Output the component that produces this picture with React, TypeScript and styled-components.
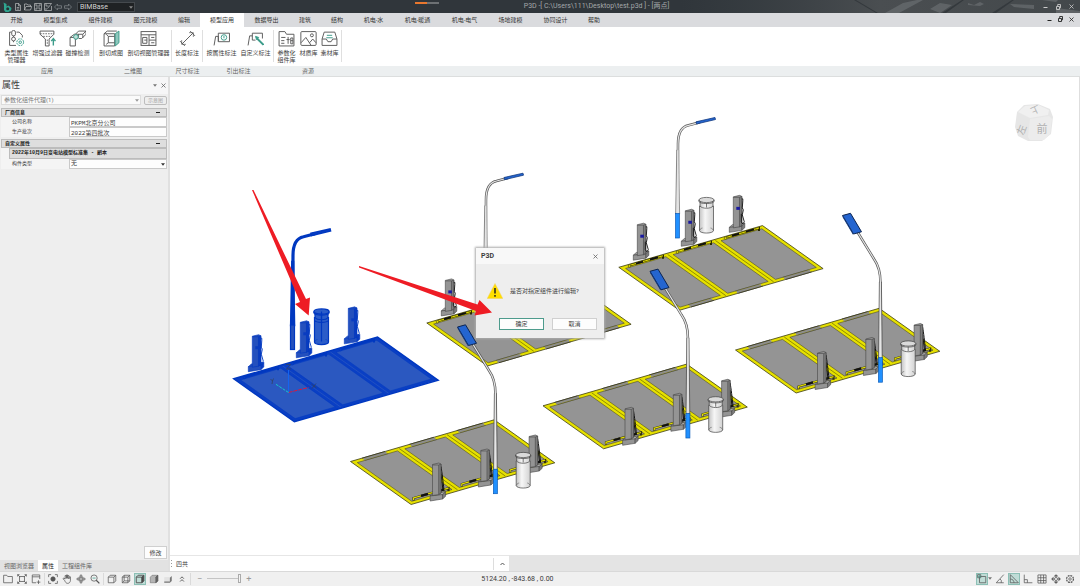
import React from "react";
import styled, { createGlobalStyle, css } from "styled-components";

const GlobalStyle = createGlobalStyle`
  * { box-sizing: border-box; }
  body {
    margin: 0;
    font-family: Roboto, "Noto Sans CJK SC", sans-serif;
    font-size: 6px;
    line-height: 8px;
    color: #3c3c3c;
    background: #f0f0f0;
  }
  button, input, select { font: inherit; color: inherit; margin: 0; padding: 0; }
  button { background: none; border: 0; white-space: nowrap; cursor: pointer; }
  svg { display: block; flex: none; }
`;

const Page = styled.div`
  display: flex;
  flex-direction: column;
  min-height: 100vh;
`;

/* ---------- title bar ---------- */

const TitleBar = styled.header`
  position: relative;
  display: flex;
  align-items: center;
  height: 13px;
  padding: 0 4px 0 3px;
  color: #a4a8aa;
  background: #30363b;
`;
const TitleTexture = styled.svg`
  position: absolute;
  right: 0;
  top: 0;
  height: 13px;
  width: 400px;
`;
const QuickTools = styled.div`
  display: flex;
  flex: 1;
  align-items: center;
  gap: 1px;
`;
const QuickButton = styled.button`
  display: flex;
  width: 9px;
  height: 11px;
  align-items: center;
  justify-content: center;
`;
const SelectWrap = styled.span`
  position: relative;
  display: flex;
  svg {
    position: absolute;
    right: 2px;
    top: 50%;
    margin-top: -1px;
    pointer-events: none;
  }
`;
const ProductSelect = styled.select`
  appearance: none;
  width: 58px;
  height: 10px;
  margin-left: 4px;
  padding-left: 2px;
  border: 1px solid #454a4e;
  background: #1f2224;
  color: #d4d4d4;
  font-size: 7px;
  line-height: 8px;
`;
const Progress = styled.div`
  position: absolute;
  left: 50%;
  top: 2px;
  width: 24px;
  height: 2px;
  margin-left: -125px;
  background: linear-gradient(to right, #e8772e 50%, #6d7174 50%);
`;
const DocumentTitle = styled.h1`
  position: relative;
  margin: 0 0 0 114px;
  font-size: 7px;
  font-weight: 400;
  line-height: 13px;
  white-space: nowrap;
`;
const WindowButtons = styled.div`
  position: relative;
  display: flex;
  flex: 1;
  justify-content: flex-end;
  gap: 3px;
`;
const WindowButton = styled.button<{ $tight?: boolean }>`
  display: flex;
  align-items: center;
  justify-content: center;
  width: ${(p) => (p.$tight ? 8 : 10)}px;
  height: 12px;
`;

/* ---------- menu tabs ---------- */

const MenuBar = styled.nav`
  display: flex;
  height: 14px;
  padding-right: 5px;
  background: #dadbde;
`;
const MenuTab = styled.button<{ $width: number; $active?: boolean }>`
  width: ${(p) => p.$width}px;
  background: ${(p) => (p.$active ? "#fff" : "transparent")};
  color: #333;
`;

/* ---------- ribbon ---------- */

const Ribbon = styled.section`
  display: flex;
  height: 50px;
  background: #fff;
  border-bottom: 1px solid #dcdede;
`;
const Group = styled.div<{ $fill?: boolean }>`
  display: flex;
  flex-direction: column;
  ${(p) => p.$fill && css`flex: 1;`}
`;
const GroupItems = styled.div<{ $line?: boolean }>`
  display: flex;
  flex: 1;
  min-height: 0;
  margin-top: 3px;
  margin-bottom: 4px;
  padding: 0 1px;
  ${(p) => p.$line && css`border-right: 1px solid #dfdfdf;`}
`;
const GroupLabel = styled.div`
  flex: none;
  height: 10px;
  line-height: 10px;
  text-align: center;
  color: #666;
  background: #eceff0;
`;
const Tool = styled.button<{ $width: number }>`
  display: flex;
  flex-direction: column;
  align-items: center;
  gap: 2px;
  width: ${(p) => p.$width}px;
  line-height: 7px;
  white-space: pre;
`;

/* ---------- body ---------- */

const Main = styled.main`
  display: flex;
  flex: 1;
`;
const SidePanel = styled.aside`
  display: flex;
  flex-direction: column;
  width: 170px;
  border-right: 2px solid #e0e0e0;
  background: #eeeeee;
`;
const PanelTitle = styled.div`
  display: flex;
  align-items: center;
  height: 17px;
  padding: 0 2px;
  gap: 4px;
  background: #f6f6f7;
  h2 {
    flex: 1;
    margin: 0;
    font-size: 9px;
    line-height: 17px;
    font-weight: 400;
  }
`;
const PanelTop = styled.div`
  display: flex;
  align-items: center;
  justify-content: space-between;
  padding: 1px 1px 3px;
`;
const mono = css`font-family: "Liberation Mono", "Noto Sans CJK SC", monospace;`;
const ComponentSelect = styled.select`
  appearance: none;
  width: 140px;
  height: 10px;
  padding-left: 2px;
  border: 1px solid #dcdcdc;
  background: #fafafa;
  color: #777;
`;
const DiagramButton = styled.button`
  width: 23px;
  height: 9px;
  border: 1px solid #bdbdbd;
  border-radius: 2px;
  color: #a8a8a8;
  font-size: 5px;
  line-height: 7px;
`;
const Section = styled.section`
  margin: 0 1px 2px;
  background: #f4f4f4;
  font-size: 5px;
  ${mono}
`;
const SectionHead = styled.div`
  display: flex;
  align-items: center;
  justify-content: space-between;
  height: 9px;
  padding: 0 6px 0 3px;
  border: 1px solid #bcbcbc;
  background: #dedede;
  font-weight: 700;
  color: #222;
`;
const SubHead = styled.div`
  height: 11px;
  margin-left: 8px;
  padding-left: 2px;
  border: 1px solid #bcbcbc;
  background: #dedede;
  font-weight: 700;
  line-height: 9px;
  white-space: pre;
  color: #222;
`;
const Field = styled.div`
  display: flex;
  align-items: center;
  height: 10px;
  label { width: 68px; padding-left: 11px; }
  > span { flex: 1; }
`;
const fieldBox = css`
  flex: 1;
  width: 100%;
  min-width: 0;
  height: 10px;
  padding-left: 1px;
  border: 1px solid #c9c9c9;
  border-radius: 0;
  background: #fdfdfd;
  font-size: 6px;
`;
const FieldInput = styled.input`${fieldBox}`;
const FieldSelect = styled.select`appearance: none; ${fieldBox}`;
const PanelActions = styled.div`
  display: flex;
  flex: 1;
  align-items: flex-end;
  justify-content: flex-end;
  padding: 0 1px 1px;
`;
const ApplyButton = styled.button`
  width: 23px;
  height: 13px;
  border: 1px solid #cfcfcf;
  background: #fdfdfd;
`;
const PanelTabs = styled.div`
  display: flex;
  height: 11px;
  background: #e2e2e2;
`;
const PanelTab = styled.button<{ $active?: boolean }>`
  padding: 0 4px;
  color: ${(p) => (p.$active ? "#222" : "#666")};
  background: ${(p) => (p.$active ? "#fff" : "transparent")};
`;

const Workspace = styled.section`
  display: flex;
  flex: 1;
  flex-direction: column;
  min-width: 0;
`;
const Viewport = styled.div`
  position: relative;
  flex: 1;
  min-height: 360px;
  background: #fff;
  border-right: 1px solid #dedede;
`;
const Scene = styled.svg`
  position: absolute;
  inset: 0;
  pointer-events: none;
`;
const ViewTabs = styled.div`
  display: flex;
  height: 16px;
  background: #e4e4e4;
`;
const ViewTab = styled.div`
  display: flex;
  align-items: center;
  width: 339px;
  padding: 0 4px 0 1px;
  border-top: 1px solid #e6e6e6;
  background: #fff;
  button:first-of-type { flex: 1; padding-left: 3px; text-align: left; }
`;
const TabMenu = styled.button`
  display: flex;
  justify-content: center;
  width: 12px;
  padding: 4px 0 4px 5px;
  border-left: 1px solid #ddd;
`;

/* ---------- dialog ---------- */

const Dialog = styled.div`
  position: absolute;
  left: 306px;
  top: 171px;
  display: flex;
  flex-direction: column;
  width: 128px;
  height: 90px;
  background: #eeeeee;
  box-shadow: 0 0 2px 1px #aaaaaa;
`;
const DialogTitle = styled.div`
  display: flex;
  align-items: center;
  justify-content: space-between;
  height: 16px;
  padding: 0 6px 0 5px;
  background: #f8f8f8;
  font-size: 7px;
  font-weight: 700;
`;
const DialogBody = styled.div`
  display: flex;
  flex: 1;
  align-items: center;
  gap: 7px;
  padding: 0 11px;
  p { margin: 0; }
`;
const DialogActions = styled.div`
  display: flex;
  justify-content: flex-end;
  gap: 8px;
  padding: 0 7px 8px;
`;
const DialogButton = styled.button<{ $primary?: boolean }>`
  width: 45px;
  height: 12px;
  border: 1px solid ${(p) => (p.$primary ? "#4d9b8c" : "#d0d0d0")};
  background: #fdfdfd;
`;

/* ---------- status bar ---------- */

const StatusBar = styled.footer`
  display: flex;
  align-items: center;
  height: 15px;
  padding: 0 4px 1px 2px;
  border-top: 1px solid #d9d9d9;
  background: #f0f0f0;
`;
const StatusGroup = styled.div`
  display: flex;
  align-items: center;
  gap: 2px;
  padding-right: 2px;
  margin-right: 2px;
  border-right: 1px solid #dadada;
`;
const StatusButton = styled.button<{ $on?: boolean }>`
  display: flex;
  align-items: center;
  justify-content: center;
  width: 12px;
  height: 12px;
  ${(p) => p.$on && css`background: #bfdcd6; border: 1px solid #8cbfb5;`}
`;
const ZoomControl = styled.label`
  display: flex;
  align-items: center;
  gap: 5px;
  color: #999;
  font-size: 9px;
  padding-left: 4px;
  input {
    appearance: none;
    width: 34px;
    height: 10px;
    background: linear-gradient(#c4c4c4, #c4c4c4) center / 100% 1px no-repeat;
  }
  input::-webkit-slider-thumb {
    appearance: none;
    width: 3px;
    height: 9px;
    border: 1px solid #aaa;
    background: #f4f4f4;
  }
`;
const Coordinates = styled.output`
  flex: 1;
  padding-left: 230px;
  font-size: 7px;
  white-space: pre;
`;
const StatusRight = styled.div`
  display: flex;
  gap: 2px;
`;
const SplitButton = styled.span`
  display: flex;
  align-items: center;
`;

/* ---------- icons ---------- */

const G = "#3c9c8a";
type IcoProps = { s?: number; c?: string; w?: number; children: React.ReactNode };
const Ico = ({ s = 10, c = "#555", w = 1, children }: IcoProps) => (
  <svg width={s} height={s} viewBox="0 0 16 16" fill="none" stroke={c} strokeWidth={w} aria-hidden="true">
    {children}
  </svg>
);
const Caret = ({ c = "#777" }: { c?: string }) => (
  <svg width="4" height="3" viewBox="0 0 4 3" aria-hidden="true"><path d="M0 .3h4L2 2.7z" fill={c} /></svg>
);
const Cross = ({ c = "#666" }: { c?: string }) => (
  <svg width="5" height="5" viewBox="0 0 5 5" stroke={c} strokeWidth=".8" aria-hidden="true"><path d="M.5.5l4 4M4.5.5l-4 4" /></svg>
);
const Minus = ({ c = "#666" }: { c?: string }) => (
  <svg width="5" height="5" viewBox="0 0 5 5" stroke={c} strokeWidth="1" aria-hidden="true"><path d="M.5 3.5h4" /></svg>
);
const Collapse = () => (
  <svg width="4" height="5" viewBox="0 0 4 5" stroke="#222" strokeWidth="1" aria-hidden="true"><path d="M0 2.5h4" /></svg>
);
const Restore = ({ c = "#666" }: { c?: string }) => (
  <svg width="5" height="6" viewBox="0 0 5 6" stroke={c} strokeWidth=".9" fill="none" aria-hidden="true"><path d="M.5 2.5h3v3h-3zM1.7 2V.5h2.8v3.3h-1" /></svg>
);

const ribbonIcons: Record<string, React.ReactNode> = {
  type: <><path d="M3 2H1.500v12.500h6M8 2h2.500l3 3v2" /><rect x="3.500" y=".5" width="3.500" height="5" rx="1.500" /><circle cx="5.200" cy="8.500" r="1.800" /><path d="M5.200 5.500v1.200M5.200 10.300v1.200" /><circle cx="11.500" cy="11.500" r="3.200" stroke={G} strokeDasharray="1.700 .8" /><circle cx="11.500" cy="11.500" r="1.200" stroke={G} /></>,
  filter: <><path d="M1 1h13v3L9.500 8.500V15H6V8.500L1 4z" /><path d="M1 3.500h13M4 6h7M7.800 9v4" strokeDasharray="1.500 1" strokeWidth=".8" /><path d="M13.500 14.500v-6M11.500 10.500l2-2.500 2 2.500" stroke={G} strokeWidth="1.300" /></>,
  clash: <><path d="M1 7l4-3h4v3l-3 2v6H1zM1 7h5M6 9V7l3-3" /><path d="M6 4l3-3h7v3l-4 4H9M9 4h4l3-3M13 4v3.500" /><circle cx="6.500" cy="6.500" r="2.200" stroke={G} fill="#bfe0d9" /></>,
  section: <><path d="M1 3.500L4 1h9M1 3.500V15h10V3.500zM11 6H5v6h6M5 12l-2 1.500M5 6L3 4" /><path d="M11.500 3.500L15 1v11l-3.500 3z" stroke={G} fill="#8fc7bc" /></>,
  views: <><rect x="1" y="1.500" width="14" height="13" /><path d="M1 4.500h14M8.500 4.500v10M8.500 9.500H15M2.500 7h4v5.500h-4zM10.500 7h3M10.500 12h3M4 9.500h2.500" /></>,
  length: <><path d="M3 13L13 3M1 10.500l4.500 4.500M10.500 1l4.500 4.500" /><path d="M2.500 9.500v4h4M9.500 2.500h4v4" strokeWidth=".7" /></>,
  prop: <><path d="M5 3h10.500v8H5zM5 6H2.500L1 14.500M5 6v5" /><circle cx="10.300" cy="7" r="2.600" stroke={G} /><path d="M10.300 5.500v2.300" stroke={G} /></>,
  custom: <><path d="M14.500 8V3H5v6.500h3M5 5.500H2.500L1 14.500" /><path d="M9.500 8l6 6" stroke={G} strokeWidth="1.800" /><path d="M8 6l3 1-2 2z" stroke={G} fill={G} /></>,
  param: <><path d="M1 1.500h5.500L8 4h7v11H1zM3 7h4M3 10h3M3 12.500h3" /><path d="M9.500 6.500v6.500M8 9h3M12 7.500h2v5.500h-2zM12 10h2" /></>,
  material: <><rect x=".8" y="1.500" width="14.400" height="13" rx="1" /><circle cx="11.200" cy="5" r="1.400" /><path d="M1 12l4.500-5 5 7.500M9 12l3-3.500 3 3.500" /></>,
  assets: <><path d="M1 8.500L3 2h10l2 6.500v6H1zM1 8.500h4l1.500 2.500h3L11 8.500h4" /><path d="M5.500 5h5M5 7.300h6" stroke={G} /></>,
};

const toolGroups = [
  { label: "应用", tools: [["type", "类型属性\n管理器", 31], ["filter", "增强过滤器", 31], ["clash", "碰撞检测", 29]] },
  { label: "二维图", tools: [["section", "剖切成图", 32], ["views", "剖切视图管理器", 43]] },
  { label: "尺寸标注", tools: [["length", "长度标注", 28]] },
  { label: "引出标注", tools: [["prop", "按属性标注", 35], ["custom", "自定义标注", 33]] },
  { label: "资源", tools: [["param", "参数化\n组件库", 23], ["material", "材质库", 21], ["assets", "素材库", 21]] },
] as { label: string; tools: [string, string, number][] }[];

const menu: [string, number][] = [
  ["开始", 33], ["模型集成", 45], ["组件建模", 45], ["图元建模", 45], ["编辑", 32], ["模型应用", 44],
  ["数据导出", 45], ["建筑", 32], ["结构", 32], ["机电-水", 41], ["机电-暖通", 47], ["机电-电气", 47],
  ["场地建模", 45], ["协同设计", 45], ["帮助", 32],
];

const quick = [
  ["新建", <path d="M3 1h6.500L13 5v10H3zM9 1v4.500h4M5.500 9h5M5.500 12h5" />],
  ["打开", <path d="M1 14V2h5l1.500 2H13v3M1 14L4 7h11.500L13 14z" />],
  ["保存", <path d="M1 1h14v14H1zM4 1v5h8V1M4 15v-5h8v5" />],
  ["另存为", <path d="M15 6v9H1V1h14L7 11M4 1v5h5M4 15v-5" />],
  ["撤销", <path d="M1 8l6-6v3.500h8v5H7V14z" />],
  ["重做", <path d="M15 8L9 2v3.500H1v5h8V14z" />],
] as [string, React.ReactNode][];

const cube = "M2 5l3-3h9v9l-3 3H2zM2 5h9v9M11 5l3-3";
type StatusItem = { name: string; on?: boolean; d: React.ReactNode };
const statusLeft: StatusItem[][] = [
  [
    { name: "文件夹", d: <path d="M1 14V2h5l1.500 2H15v10z" /> },
    { name: "适应窗口", d: <path d="M1 1l4 4M15 1l-4 4M1 15l4-4M15 15l-4-4M4 4h8v8H4zM1 4V1h3M12 1h3v3M15 12v3h-3M4 15H1v-3" /> },
    { name: "新窗口", d: <path d="M14 8V1.500H2V14h6M2 4.500h12M12 10v6M9 13h6" /> },
  ],
  [
    { name: "聚焦", d: <><path d="M1 5V1h4M11 1h4v4M15 11v4h-4M5 15H1v-4" /><circle cx="8" cy="8" r="3.500" fill="#555" /></> },
    { name: "平移", d: <path d="M4 10L1.500 7.500 3 6.500l2 1.500V2.500h2V7 1.500h2V7 2.500h2V8l.5-3.500h2V10c0 3-2 5-4.500 5S5.500 13 4 10z" /> },
    { name: "旋转", d: <><path d="M5.500 4L8 1l2.500 3M5.500 12L8 15l2.500-3M4 5.500L1 8l3 2.500M12 5.500L15 8l-3 2.500" /><ellipse cx="8" cy="8" rx="5" ry="2" /><ellipse cx="8" cy="8" rx="2" ry="5" /></> },
    { name: "缩放", d: <><circle cx="6.500" cy="6.500" r="5" /><path d="M10 10l5 5" strokeWidth="2" /><path d="M4 6.500h5" stroke={G} /></> },
  ],
  [
    { name: "线框", d: <path d={cube} /> },
    { name: "隐藏线", d: <path d={cube + "M5 2v9M2 14l3-3h9"} /> },
    { name: "着色", on: true, d: <><path d={cube} strokeWidth="1.500" /><path d="M11 5l3-3v9l-3 3z" fill="#444" /></> },
    { name: "真实", d: <><path d="M2 5l3-3h9v9l-3 3H2z" fill="#b4b4b4" strokeWidth=".7" /><path d="M11 5l3-3v9l-3 3z" fill="#666" /></> },
    { name: "无边", d: <><path d="M2 5h9v9H2z" fill="#e2e2e2" stroke="none" /><path d="M2 14h9l3-3V3l-3 3v6H2z" fill="#777" stroke="none" /></> },
    { name: "展开", d: <path d="M5 7.500l3-3 3 3M5 12l3-3 3 3" strokeWidth="1.500" /> },
  ],
];
const statusRight: StatusItem[] = [
  { name: "捕捉", on: true, d: <><path d="M4 4h10v10H4zM1 1h5v5H1z" /><circle cx="4" cy="4" r="1.500" stroke={G} /></> },
  { name: "极轴", d: <path d="M14 1L2 14h12M8 8l2 2v4" /> },
  { name: "角度", on: true, d: <path d="M2 1v13h13zM2 8c4 0 6 3 6 6" /> },
  { name: "正交", d: <path d="M2 1v13h13M2 9h5v5" /> },
  { name: "网格", d: <path d="M1.500 1.500h13v13h-13zM6 1.500v13M10.500 1.500v13M1.500 6h13M1.500 10.500h13" /> },
  { name: "查看", d: <><path d="M1 8l2.500-2.500v5zM15 8l-2.500-2.500v5zM8 1L5.500 3.500h5zM8 15l-2.500-2.500h5z" fill="#555" /><circle cx="8" cy="8" r="2.500" /></> },
  { name: "设置", d: <><circle cx="8" cy="8" r="5.500" strokeDasharray="3 1.300" strokeWidth="2" /><circle cx="8" cy="8" r="2" /></> },
];

/* ---------- model drawing ---------- */

type Shade = { edge: string; line: string; bay: string; body: string; side: string; pole: string; panel: string; foot: string };
const normal: Shade = { edge: "#e6e000", line: "#3c3c14", bay: "#949494", body: "#949494", side: "#7c7c7c", pole: "#e4e4e4", panel: "#2465d0", foot: "#2090ff" };
const selected: Shade = { edge: "#0a3fc4", line: "#0038c0", bay: "#2b58c0", body: "#2450bd", side: "#0a3cc0", pole: "#0a3fc4", panel: "#0a3fc4", foot: "#2450bd" };

const at = (x: number, y: number) => (u: number, v: number) =>
  `${(x + u * 143.7 + v * 60.6).toFixed(1)},${(y - u * 41.7 + v * 43).toFixed(1)}`;

const Slab = ({ x, y, k, greyEdge }: { x: number; y: number; k: Shade; greyEdge: 0 | 1 }) => {
  const p = at(x, y);
  const blue = k === selected;
  return (
    <g>
      <polygon points={[p(0, 0), p(1, 0), p(1, 1), p(0, 1)].join(" ")} fill={k.edge} stroke={k.line} strokeWidth={blue ? 1.5 : 0.8} />
      {[[0.026, 0.306], [0.357, 0.639], [0.69, 0.974]].map(([a, b]) => (
        <polygon key={a} points={[p(a, 0.05), p(b, 0.05), p(b, 0.95), p(a, 0.95)].join(" ")} fill={k.bay} stroke={k.line} strokeWidth=".5" />
      ))}
      {[0.331, 0.664].map((u) => (
        <polyline key={u} points={`${p(u, 0.02)} ${p(u, 0.98)}`} stroke={blue ? "#2b58c0" : "#6b6a00"} strokeWidth=".7" fill="none" />
      ))}
      {!blue && [[0.08, 0.24], [0.41, 0.58], [0.74, 0.92]].map(([a, b]) => (
        <g key={a}>
          <polyline points={`${p(a, greyEdge ? 0.975 : 0.025)} ${p(b, greyEdge ? 0.975 : 0.025)}`} stroke="#8d8d8d" strokeWidth="2.2" />
          <polyline points={`${p(a, greyEdge)} ${p(b, greyEdge)}`} stroke="#333" strokeWidth=".8" />
          <polyline points={`${p(a, greyEdge ? 0.95 : 0.05)} ${p(b, greyEdge ? 0.95 : 0.05)}`} stroke="#444" strokeWidth=".5" />
        </g>
      ))}
    </g>
  );
};

const Pump = ({ x, y, k, front }: { x: number; y: number; k: Shade; front?: boolean }) => {
  const blue = k === selected;
  const ink = blue ? k.line : "#444";
  return (
    <g transform={`translate(${x} ${y})`} stroke={ink} strokeWidth=".6" strokeLinejoin="round">
      {front && <path d="M8.500 3c1 6 2 14 3 24M8.500 10l2 17" fill="none" stroke="#111" strokeWidth="1" />}
      <g transform={front ? "translate(1.6 1)" : undefined}>
        <path d="M-4 31.500l3-2.700 12.500-1.500-2.500 3.200z" fill={blue ? k.body : "#a6a6a6"} />
        <path d="M-4 31.500l12.500-1.500v4.500l-12.500 2z" fill={k.body} />
        <path d="M8.500 30l3-2.700v4.500l-3 2.700z" fill={k.side} />
      </g>
      <path d="M0 1l6.300-1.500 2.200 1v29L6.200 31 0 32z" fill={k.body} />
      <path d="M6.200 1.500l2.300-1v29L6.200 31z" fill={k.side} />
      <path d="M0 1.500h6" fill="none" />
      {!front && (
        <>
          <rect x="3" y="11" width="3.600" height="3" fill={blue ? k.side : "#1a1aa0"} stroke="none" />
          <path d="M8.500 3h1v2l-.5 7 1 2-1 5 2 7-1.500 2-1.500-2V18" fill="none" stroke={blue ? ink : "#111"} strokeWidth=".9" />
        </>
      )}
    </g>
  );
};

const Barrel = ({ x, y, k }: { x: number; y: number; k: Shade }) => {
  const blue = k === selected;
  const ink = blue ? k.line : "#444";
  return (
    <g transform={`translate(${x} ${y})`} stroke={ink} strokeWidth={blue ? 1.2 : 0.7} fill={blue ? "#2b5cc8" : "url(#barrel)"}>
      <path d="M-7 6v24.500c0 3.400 14 3.400 14 0V6z" />
      <path d="M-7 30.500c1-2 2-2.300 3-2.500M7 30.500c-1-2-2-2.300-3-2.500" fill="none" strokeWidth=".5" />
      <path d="M-6.500 1v5c2 3 11 3 13 0V1z" />
      <path d="M0 3v4.500" />
      <ellipse cx="0" cy="0" rx="7.600" ry="2.600" fill={blue ? "#2b5cc8" : "#dadada"} />
      <path d="M-7.600 0v1.200c0 3.200 15.200 3.200 15.200 0V0" fill="none" />
      {blue && <path d="M0 0v30M-7 9c2 2.500 12 2.500 14 0" fill="none" />}
    </g>
  );
};

const backPole = "M677.600 214L678 144Q678 127.500 688.500 125.300L700 122.300";
const LotBack = ({ dx, dy, k = normal }: { dx: number; dy: number; k?: Shade }) => {
  const blue = k === selected;
  const ink = blue ? k.line : "#555";
  return (
    <g transform={`translate(${dx} ${dy})`}>
      <path d={backPole} fill="none" stroke={ink} strokeWidth={blue ? 3.2 : 2.5} />
      <path d="M676.800 150h1.800l1 64h-4z" fill={blue ? k.line : "#e4e4e4"} stroke={ink} strokeWidth={blue ? 1.4 : 0.6} />
      {!blue && <path d={backPole} fill="none" stroke={k.pole} strokeWidth="1.200" />}
      <path d="M696 121.800l19-4.300.5 2-19 4.500z" fill={k.panel} stroke={blue ? k.line : "#123a80"} strokeWidth={blue ? 1.6 : 0.8} />
      <rect x="675.500" y="213.500" width="4" height="24.500" fill={k.foot} stroke={blue ? k.line : "#0d5cb8"} strokeWidth={blue ? 1.2 : 0.7} />
      <Slab x={618.8} y={267.3} k={k} greyEdge={1} />
      {[0, 48, 96].map((d) => (
        <g key={d}>
          <path d={`M${630 + d} ${265.3 - d * 0.29}l33-9.500v3`} fill="none" stroke={blue ? k.line : "#2a2a00"} strokeWidth="2" />
          {!blue && <path d={`M${630 + d} ${265.3 - d * 0.29}l33-9.500`} stroke={k.edge} strokeWidth="1.100" />}
          {!blue && <path d={`M${636 + d} ${263.6 - d * 0.29}l7-2M${650 + d} ${259.5 - d * 0.29}l8-2.300`} stroke="#111" strokeWidth="2" />}
          <circle cx={629.5 + d} cy={266 - d * 0.29} r="1.300" fill={k.edge} stroke={k.line} strokeWidth=".6" />
          <Pump x={637.3 + d} y={223.7 - d * 0.29} k={k} />
        </g>
      ))}
      <Barrel x={706.5} y={200} k={k} />
    </g>
  );
};

const frontPole = "M880.400 358V282Q880.400 268 874 259L857.500 232";
const LotFront = ({ dx, dy }: { dx: number; dy: number }) => (
  <g transform={`translate(${dx} ${dy})`}>
    <Slab x={735.5} y={350} k={normal} greyEdge={0} />
    {[0, 48.3, 96.6].map((d) => (
      <g key={d}>
        <path d={`M${798.5 + d} ${389 - d * 0.29}v-2.500l35-9.800v3`} fill="none" stroke="#33330a" strokeWidth="2.200" />
        <path d={`M${798.5 + d} ${388.5 - d * 0.29}v-2l35-9.800`} fill="none" stroke="#e6e000" strokeWidth="1.200" />
        <path d={`M${806 + d} ${384.4 - d * 0.29}l7-2M${824 + d} ${379.4 - d * 0.29}l5-1.400`} stroke="#111" strokeWidth="2.200" />
        <Pump x={817.5 + d} y={352 - d * 0.29} k={normal} front />
      </g>
    ))}
    <path d={frontPole} fill="none" stroke="#555" strokeWidth="2.500" />
    <path d="M879.400 282h2l.9 76h-3.800z" fill="#d8d8d8" stroke="#444" strokeWidth=".7" />
    <path d={frontPole} fill="none" stroke="#e6e6e6" strokeWidth="1.200" />
    <path d="M842.500 215.500l8-2.200 11 18.500-8 2.200z" fill="#2465d0" stroke="#0d2550" strokeWidth="1" />
    <path d="M842.500 215.500l.3 2 10 17 .7-.5z" fill="#123a80" />
    <rect x="878.400" y="357.700" width="4" height="24.500" fill="#2090ff" stroke="#0d5cb8" strokeWidth=".7" />
    <Barrel x={908.2} y={343.5} k={normal} />
  </g>
);

const SceneDrawing = () => (
  <Scene width="100%" height="100%" viewBox="170 77 909 478" preserveAspectRatio="xMinYMin meet" role="img" aria-label="模型视图">
    <defs>
      <linearGradient id="barrel">
        <stop offset="0" stopColor="#c4c4c4" />
        <stop offset=".4" stopColor="#f6f6f6" />
        <stop offset="1" stopColor="#d2d2d2" />
      </linearGradient>
    </defs>
    <LotBack dx={0} dy={0} />
    <LotBack dx={-192} dy={55.7} />
    <LotBack dx={-385} dy={111.5} k={selected} />
    <LotFront dx={0} dy={0} />
    <LotFront dx={-192.5} dy={55.8} />
    <LotFront dx={-385} dy={111.5} />
    <g fill="none" strokeWidth="1">
      <path d="M288.500 392.500V370" stroke="#1464f0" />
      <path d="M288.500 392.500l20-5" stroke="#d81840" strokeDasharray="4 1" />
      <path d="M288.500 392.500l-13-8.500" stroke="#18c8c8" strokeDasharray="3 1" />
      <path d="M286 364.500h4.500l-4 4.500h4.500M270.500 379l2 2 1-2.500M272.500 381l-.5 3M311.500 384l5 4M316 383.500l-4 5" stroke="#33415e" strokeWidth=".8" />
    </g>
    <g>
      <path d="M1024 105l14-1 12 5 3 8-2 17-9 7h-14l-10-5-3-9 2-15z" fill="#e6e6e6" />
      <path d="M1030 119l19-3 3 3-2 15-6 6h-14l-2-3z" fill="#ececec" />
      <path d="M1018 112l7-6 13-1 11 5-1 5-18 3z" fill="#f0f0f0" />
      <g fill="#b0b0b0" fontFamily="Noto Sans CJK SC, sans-serif" textAnchor="middle">
        <text x="1042" y="133" fontSize="11">前</text>
        <text transform="translate(1025 131) rotate(-70)" fontSize="10">左</text>
        <text transform="translate(1034 107) rotate(155)" fontSize="9">上</text>
      </g>
    </g>
    <path d="M252 190h1.500L306 299l4-1.500-1.300 18L295 304l5-2z" fill="#ee1c24" />
  </Scene>
);

export default function App() {
  return (
    <Page lang="zh-CN">
      <GlobalStyle />
      <TitleBar>
        <TitleTexture viewBox="0 0 400 13" preserveAspectRatio="none" aria-hidden="true">
          <defs>
            <linearGradient id="sheen">
              <stop offset="0" stopColor="#3d4347" stopOpacity="0" />
              <stop offset=".5" stopColor="#4a4e51" />
              <stop offset="1" stopColor="#43484b" />
            </linearGradient>
          </defs>
          <path d="M0 0h400v13H0z" fill="url(#sheen)" />
          <path d="M205 13l18-10 14-3h6l-24 13zM250 9l10-6 12 2-12 8zM288 3l6 2 6-3 4 2-4 2-12-1zM330 4l24 1v4l-20-2zM362 0h16l-2 2zM376 8l24 3v2h-24z" fill="#6a6e70" opacity=".7" />
          <path d="M262 13l20-13h2l-18 13zM312 13l20-13h2l-18 13zM176 0l22 13h-2L174 0z" fill="#34393d" />
        </TitleTexture>
        <QuickTools>
          <svg width="9" height="10" viewBox="0 0 9 10" aria-hidden="true">
            <path d="M.5.5l3 1.500v2.500l2-1 3 2.500-.5 2.500L5.500 10H2.500L1 8V3z" fill="#2fa590" />
            <circle cx="4.700" cy="6.800" r="1.500" fill="#263034" />
          </svg>
          {quick.map(([name, d], i) => (
            <QuickButton key={name} aria-label={name}><Ico s={8} w={1.3} c={i > 3 ? "#8d9194" : "#c6c8c9"}>{d}</Ico></QuickButton>
          ))}
          <SelectWrap>
            <ProductSelect aria-label="产品" defaultValue="BIMBase"><option>BIMBase</option></ProductSelect>
            <Caret c="#888" />
          </SelectWrap>
        </QuickTools>
        <Progress />
        <DocumentTitle>P3D -[ C:\Users\111\Desktop\test.p3d ] - [两点]</DocumentTitle>
        <WindowButtons>
          <WindowButton aria-label="最小化"><Minus c="#ccc" /></WindowButton>
          <WindowButton aria-label="还原"><Restore c="#ccc" /></WindowButton>
          <WindowButton aria-label="关闭"><Cross c="#ccc" /></WindowButton>
        </WindowButtons>
      </TitleBar>

      <MenuBar>
        {menu.map(([name, w]) => (
          <MenuTab key={name} $width={w} $active={name === "模型应用"}>{name}</MenuTab>
        ))}
        <WindowButtons>
          <WindowButton $tight aria-label="最小化视图"><Minus c="#222" /></WindowButton>
          <WindowButton $tight aria-label="还原视图"><Restore c="#222" /></WindowButton>
          <WindowButton $tight aria-label="关闭视图"><Cross c="#222" /></WindowButton>
        </WindowButtons>
      </MenuBar>

      <Ribbon>
        {toolGroups.map((g) => (
          <Group key={g.label}>
            <GroupItems $line>
              {g.tools.map(([icon, label, w]) => (
                <Tool key={label} $width={w}>
                  <Ico s={17} c="#5a5a5a" w={0.9}>{ribbonIcons[icon]}</Ico>
                  {label}
                </Tool>
              ))}
            </GroupItems>
            <GroupLabel>{g.label}</GroupLabel>
          </Group>
        ))}
        <Group $fill><GroupItems /><GroupLabel /></Group>
      </Ribbon>

      <Main>
        <SidePanel>
          <PanelTitle>
            <h2>属性</h2>
            <button aria-label="面板选项"><Caret /></button>
            <button aria-label="关闭面板"><Cross /></button>
          </PanelTitle>
          <PanelTop>
            <SelectWrap>
              <ComponentSelect aria-label="组件" defaultValue="a"><option value="a">参数化组件代理(1)</option></ComponentSelect>
              <Caret c="#999" />
            </SelectWrap>
            <DiagramButton>示意图</DiagramButton>
          </PanelTop>
          <Section>
            <SectionHead>厂商信息<Collapse /></SectionHead>
            <Field><label htmlFor="company">公司名称</label><FieldInput id="company" defaultValue="PKPM北京分公司" /></Field>
            <Field><label htmlFor="batch">生产批次</label><FieldInput id="batch" defaultValue="2022第四批次" /></Field>
          </Section>
          <Section>
            <SectionHead>自定义属性<Collapse /></SectionHead>
            <SubHead>2022年10月9日变电站模型标准集 - 副本</SubHead>
            <Field>
              <label htmlFor="kind">构件类型</label>
              <SelectWrap>
                <FieldSelect id="kind" defaultValue="无"><option>无</option></FieldSelect>
                <Caret c="#333" />
              </SelectWrap>
            </Field>
          </Section>
          <PanelActions><ApplyButton>修改</ApplyButton></PanelActions>
          <PanelTabs>
            <PanelTab>视图浏览器</PanelTab>
            <PanelTab $active>属性</PanelTab>
            <PanelTab>工程组件库</PanelTab>
          </PanelTabs>
        </SidePanel>

        <Workspace>
          <Viewport>
            <SceneDrawing />
            <Dialog role="dialog" aria-label="P3D">
              <DialogTitle>P3D<button aria-label="关闭对话框"><Cross /></button></DialogTitle>
              <DialogBody>
                <svg width="16" height="16" viewBox="0 0 16 16" aria-hidden="true">
                  <path d="M8 .5L15.800 15.500H.2z" fill="#ffde00" stroke="#f0d060" strokeWidth=".5" />
                  <path d="M8 5v5.500M8 12v1.800" stroke="#222" strokeWidth="1.500" />
                </svg>
                <p>是否对指定组件进行编辑?</p>
              </DialogBody>
              <DialogActions>
                <DialogButton $primary>确定</DialogButton>
                <DialogButton>取消</DialogButton>
              </DialogActions>
            </Dialog>
            <Scene width="100%" height="100%" viewBox="170 77 909 478" preserveAspectRatio="xMinYMin meet" aria-hidden="true">
              <path d="M359 266l118.500 38.500 2-4.500 12.500 12.500-17.500 3 1.500-4.500L359 267.500z" fill="#ee1c24" />
            </Scene>
          </Viewport>
          <ViewTabs>
            <ViewTab>
              <svg width="2" height="8" viewBox="0 0 2 8" fill="#999" aria-hidden="true"><path d="M0 0h1v1H0zM0 3h1v1H0zM0 6h1v1H0z" /></svg>
              <button>四共</button>
              <TabMenu aria-label="展开视图列表">
                <svg width="5" height="4" viewBox="0 0 5 4" fill="none" stroke="#555" aria-hidden="true"><path d="M.5 3l2-2 2 2" /></svg>
              </TabMenu>
            </ViewTab>
          </ViewTabs>
        </Workspace>
      </Main>

      <StatusBar>
        {statusLeft.map((group, i) => (
          <StatusGroup key={i}>
            {group.map((b) => (
              <StatusButton key={b.name} aria-label={b.name} $on={b.on}><Ico w={1.2}>{b.d}</Ico></StatusButton>
            ))}
          </StatusGroup>
        ))}
        <ZoomControl>
          −<input type="range" aria-label="缩放比例" defaultValue={100} />+
        </ZoomControl>
        <Coordinates>5124.20 , -843.68 , 0.00</Coordinates>
        <StatusRight>
          {statusRight.map((b, i) => (
            <SplitButton key={b.name}>
              <StatusButton aria-label={b.name} $on={b.on}><Ico w={1.2}>{b.d}</Ico></StatusButton>
              {i === 0 && <Caret />}
            </SplitButton>
          ))}
        </StatusRight>
      </StatusBar>
    </Page>
  );
}
